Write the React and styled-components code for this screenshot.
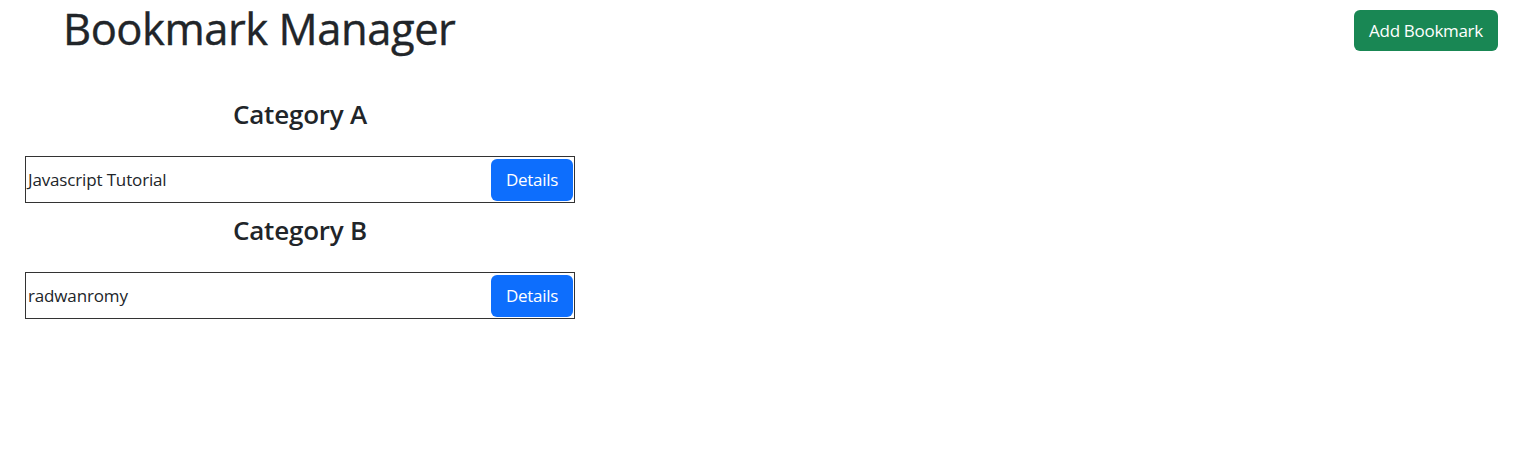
import React from "react";
import styled, { createGlobalStyle } from "styled-components";

const GlobalStyle = createGlobalStyle`
  body {
    margin: 0;
    background: #fff;
    color: #212529;
    font-family: "Open Sans", "Noto Sans", sans-serif;
  }
`;

const Page = styled.div`
  display: flex;
  flex-direction: column;
`;

const Header = styled.header`
  display: flex;
  justify-content: space-between;
  align-items: flex-start;
  height: 87px;
  padding: 0 22px 0 63px;
  box-sizing: border-box;
`;

const Title = styled.h1`
  margin: 3px 0 0;
  font-size: 43.5px;
  font-weight: 500;
  line-height: 1.2;
  letter-spacing: -0.45px;
  -webkit-text-stroke: 0.4px #212529;
`;

const Button = styled.button`
  border: none;
  border-radius: 6px;
  color: #fff;
  font-family: inherit;
  font-size: 17px;
  cursor: pointer;
  background-color: ${(p) => (p.$variant === "success" ? "#198754" : "#0d6efd")};
  height: ${(p) => p.$h}px;
  width: ${(p) => p.$w}px;
  padding: 0;
  letter-spacing: -0.3px;
`;

const AddButton = styled(Button)`
  margin-top: 10px;
`;

const Categories = styled.div`
  width: 550px;
  margin-left: 25px;
  display: flex;
  flex-direction: column;
`;

const Section = styled.section`
  display: flex;
  flex-direction: column;
`;

const CategoryTitle = styled.h4`
  margin: 0 0 27px;
  padding-top: 13px;
  font-size: 26px;
  font-weight: 600;
  line-height: 28.8px;
  text-align: center;
  letter-spacing: -0.2px;
`;

const Row = styled.div`
  display: flex;
  align-items: center;
  justify-content: space-between;
  height: 47px;
  box-sizing: border-box;
  border: 1px solid #333;
  padding: 1px 1px 0 2px;
`;

const Name = styled.span`
  font-size: 17px;
  letter-spacing: -0.15px;
`;

const bookmarks = [
  { category: "Category A", name: "Javascript Tutorial" },
  { category: "Category B", name: "radwanromy" },
];

const App = () => {
  return (
    <Page>
      <GlobalStyle />
      <Header>
        <Title>Bookmark Manager</Title>
        <AddButton $variant="success" $w={144} $h={41}>
          Add Bookmark
        </AddButton>
      </Header>
      <Categories>
        {bookmarks.map((b) => (
          <Section key={b.category}>
            <CategoryTitle>{b.category}</CategoryTitle>
            <Row>
              <Name>{b.name}</Name>
              <Button $w={82} $h={42}>Details</Button>
            </Row>
          </Section>
        ))}
      </Categories>
    </Page>
  );
};

export default App;
